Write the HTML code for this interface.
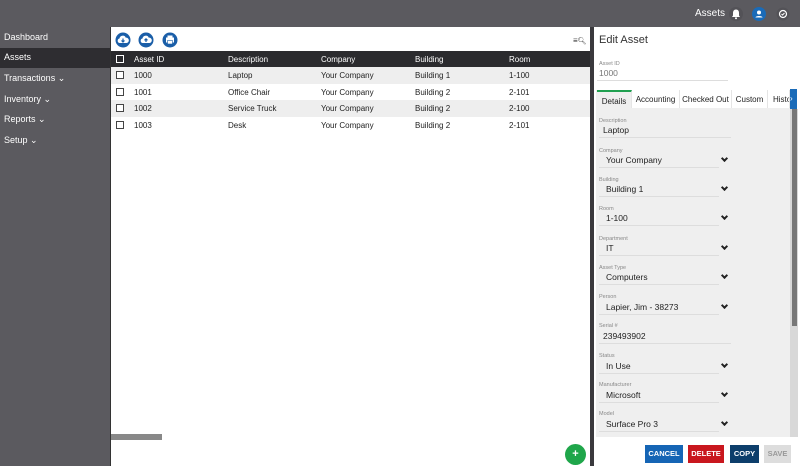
<!DOCTYPE html><html><head><style>
*{margin:0;padding:0;box-sizing:border-box}
body{width:800px;height:466px;overflow:hidden;background:#5b5a5f;font-family:"Liberation Sans",sans-serif;position:relative;font-size:8px;color:#222}
.a{position:absolute}
.side div{position:absolute;left:4px;color:#fff;font-size:9px}
.cb{position:absolute;width:8px;height:8px;border:1px solid #444;background:#fff}
.row{position:absolute;left:111px;width:479px;height:16.5px}
.row span{position:absolute;top:4px;font-size:8px;color:#222}
.lbl{position:absolute;left:599px;font-size:5.5px;color:#888}
.val{position:absolute;font-size:8.5px;color:#222}
.ul{position:absolute;height:1px;background:#ddd}
.chev{position:absolute;left:722px;width:5px;height:5px;border-right:2px solid #222;border-bottom:2px solid #222;transform:rotate(45deg)}
.btn{position:absolute;top:445px;height:18px;color:#fff;font-size:7.5px;font-weight:bold;text-align:center;line-height:18px}
.tab{position:absolute;top:90px;height:18px;font-size:8px;line-height:20px;text-align:center;background:#fff;border-right:1px solid #e5e5e5}
</style></head><body>
<div class="a" style="left:0;top:0;width:800px;height:27px;background:#5b5a5f"></div>
<div class="a" style="left:695px;top:8px;color:#fff;font-size:10px">Assets</div>
<div class="a" style="left:729px;top:7px;width:14px;height:14px;border-radius:50%;background:#535257"></div>
<svg class="a" style="left:730px;top:8px" width="12" height="12" viewBox="0 0 12 12"><path d="M6 1.5c-2 0-3 1.5-3 3.5v2.5L2 9h8L9 7.5V5c0-2-1-3.5-3-3.5z" fill="#fff"/><circle cx="6" cy="10.2" r="1" fill="#fff"/></svg>
<div class="a" style="left:752px;top:7px;width:14px;height:14px;border-radius:50%;background:#1a6bb8"></div>
<svg class="a" style="left:752px;top:7px" width="14" height="14"><circle cx="7" cy="5.5" r="2" fill="#fff"/><path d="M3.5 10.5c0-2 7-2 7 0z" fill="#fff"/></svg>
<svg class="a" style="left:776px;top:7px" width="14" height="14"><circle cx="7" cy="7" r="6.5" fill="#535257"/><circle cx="7" cy="7" r="3.5" fill="none" stroke="#fff" stroke-width="1.2"/><path d="M5.5 7l1 1 2-2" stroke="#fff" fill="none" stroke-width="1"/></svg>
<div class="side">
<div style="top:32px">Dashboard</div>
<div class="a" style="left:0;top:48px;width:110px;height:20px;background:#2e2d31"></div>
<div style="top:52px">Assets</div>
<div style="top:73px">Transactions ⌄</div>
<div style="top:94px">Inventory ⌄</div>
<div style="top:114px">Reports ⌄</div>
<div style="top:135px">Setup ⌄</div>
</div>
<div class="a" style="left:110px;top:27px;width:481px;height:439px;background:#fff;border-left:1px solid #333"></div>
<svg class="a" style="left:115px;top:32px" width="70" height="16">
<circle cx="8" cy="8" r="7.5" fill="#1a5ea8"/><circle cx="31" cy="8" r="7.5" fill="#1a5ea8"/><circle cx="55" cy="8" r="7.5" fill="#1a5ea8"/>
<path d="M4.5 11a2.3 2.3 0 010-4.5 3.3 3.3 0 016.3-.8A2.6 2.6 0 0111.5 11z" fill="#fff"/><path d="M8 6.5v3.5M6.5 8.5L8 10l1.5-1.5" stroke="#1a5ea8" fill="none" stroke-width="1.2"/>
<path d="M27.5 11a2.3 2.3 0 010-4.5 3.3 3.3 0 016.3-.8A2.6 2.6 0 0134.5 11z" fill="#fff"/><path d="M31 10V6.8M29.5 8.3L31 6.8l1.5 1.5" stroke="#1a5ea8" fill="none" stroke-width="1.2"/>
<rect x="51" y="5.5" width="8" height="5" fill="#fff"/><rect x="52.5" y="3.5" width="5" height="2" fill="#fff"/><rect x="52.5" y="8.5" width="5" height="3.5" fill="#fff" stroke="#1a5ea8" stroke-width=".6"/></svg>
<div class="a" style="left:573px;top:36px;font-size:8px;color:#333">≡<span style="font-size:7px">🔍︎</span></div>
<div class="a" style="left:111px;top:51px;width:479px;height:16px;background:#2b2b2e"></div>
<div class="cb" style="left:116px;top:55px;background:transparent;border-color:#fff"></div>
<div class="a" style="top:55px;left:134px;color:#fff;font-size:8px">Asset ID</div>
<div class="a" style="top:55px;left:228px;color:#fff;font-size:8px">Description</div>
<div class="a" style="top:55px;left:321px;color:#fff;font-size:8px">Company</div>
<div class="a" style="top:55px;left:415px;color:#fff;font-size:8px">Building</div>
<div class="a" style="top:55px;left:509px;color:#fff;font-size:8px">Room</div>
<div class="row" style="top:67px;background:#eee"><div class="cb" style="left:5px;top:4px"></div><span style="left:23px">1000</span><span style="left:117px">Laptop</span><span style="left:210px">Your Company</span><span style="left:304px">Building 1</span><span style="left:398px">1-100</span></div>
<div class="row" style="top:83.5px;background:#fff"><div class="cb" style="left:5px;top:4px"></div><span style="left:23px">1001</span><span style="left:117px">Office Chair</span><span style="left:210px">Your Company</span><span style="left:304px">Building 2</span><span style="left:398px">2-101</span></div>
<div class="row" style="top:100px;background:#eee"><div class="cb" style="left:5px;top:4px"></div><span style="left:23px">1002</span><span style="left:117px">Service Truck</span><span style="left:210px">Your Company</span><span style="left:304px">Building 2</span><span style="left:398px">2-100</span></div>
<div class="row" style="top:116.5px;background:#fff"><div class="cb" style="left:5px;top:4px"></div><span style="left:23px">1003</span><span style="left:117px">Desk</span><span style="left:210px">Your Company</span><span style="left:304px">Building 2</span><span style="left:398px">2-101</span></div>
<div class="a" style="left:111px;top:434px;width:51px;height:6px;background:#888"></div>
<div class="a" style="left:565px;top:444px;width:21px;height:21px;border-radius:50%;background:#1fa64a;color:#fff;text-align:center;line-height:21px;font-size:11px;font-weight:bold">+</div>
<div class="a" style="left:590px;top:27px;width:4px;height:439px;background:#3a393d"></div>
<div class="a" style="left:594px;top:27px;width:206px;height:439px;background:#fff"></div>
<div class="a" style="left:599px;top:34px;font-size:11px;color:#333">Edit Asset</div>
<div class="lbl" style="top:61px">Asset ID</div>
<div class="val" style="left:599px;top:68px;color:#777">1000</div>
<div class="ul" style="left:597px;top:80px;width:131px"></div>
<div class="a" style="left:596px;top:90px;width:194px;height:347px;background:#efefef"></div>
<div class="tab" style="left:597px;width:35px;background:#efefef;border-top:2px solid #20a050">Details</div>
<div class="tab" style="left:632px;width:48px">Accounting</div>
<div class="tab" style="left:680px;width:52px">Checked Out</div>
<div class="tab" style="left:732px;width:36px">Custom</div>
<div class="tab" style="left:768px;width:22px;overflow:hidden;text-align:left;padding-left:5px">Histo</div>
<div class="a" style="left:790px;top:89px;width:7px;height:20px;background:#1a6bb8;color:#fff;font-size:8px;line-height:20px">›</div>
<div class="a" style="left:790px;top:109px;width:8px;height:328px;background:#d8d8d8"></div>
<div class="a" style="left:792px;top:109px;width:5px;height:217px;background:#777"></div>
<div class="lbl" style="top:118px">Description</div><div class="val" style="left:603px;top:125px">Laptop</div><div class="ul" style="left:599px;top:137px;width:132px"></div>
<div class="lbl" style="top:148px">Company</div><div class="val" style="left:606px;top:155px">Your Company</div><div class="ul" style="left:599px;top:167px;width:120px"></div><div class="chev" style="top:156px"></div>
<div class="lbl" style="top:177px">Building</div><div class="val" style="left:606px;top:184px">Building 1</div><div class="ul" style="left:599px;top:196px;width:120px"></div><div class="chev" style="top:185px"></div>
<div class="lbl" style="top:206px">Room</div><div class="val" style="left:606px;top:213px">1-100</div><div class="ul" style="left:599px;top:225px;width:120px"></div><div class="chev" style="top:214px"></div>
<div class="lbl" style="top:236px">Department</div><div class="val" style="left:606px;top:243px">IT</div><div class="ul" style="left:599px;top:255px;width:120px"></div><div class="chev" style="top:244px"></div>
<div class="lbl" style="top:265px">Asset Type</div><div class="val" style="left:606px;top:272px">Computers</div><div class="ul" style="left:599px;top:284px;width:120px"></div><div class="chev" style="top:273px"></div>
<div class="lbl" style="top:294px">Person</div><div class="val" style="left:606px;top:302px">Lapier, Jim - 38273</div><div class="ul" style="left:599px;top:314px;width:120px"></div><div class="chev" style="top:303px"></div>
<div class="lbl" style="top:323px">Serial #</div><div class="val" style="left:603px;top:331px">239493902</div><div class="ul" style="left:599px;top:343px;width:132px"></div>
<div class="lbl" style="top:353px">Status</div><div class="val" style="left:606px;top:361px">In Use</div><div class="ul" style="left:599px;top:373px;width:120px"></div><div class="chev" style="top:362px"></div>
<div class="lbl" style="top:382px">Manufacturer</div><div class="val" style="left:606px;top:390px">Microsoft</div><div class="ul" style="left:599px;top:402px;width:120px"></div><div class="chev" style="top:391px"></div>
<div class="lbl" style="top:411px">Model</div><div class="val" style="left:606px;top:419px">Surface Pro 3</div><div class="ul" style="left:599px;top:431px;width:120px"></div><div class="chev" style="top:420px"></div>
<div class="btn" style="left:645px;width:38px;background:#1565b5">CANCEL</div>
<div class="btn" style="left:688px;width:36px;background:#c9171e">DELETE</div>
<div class="btn" style="left:730px;width:29px;background:#0d3e6b">COPY</div>
<div class="btn" style="left:764px;width:27px;background:#ddd;color:#999">SAVE</div>
</body></html>
